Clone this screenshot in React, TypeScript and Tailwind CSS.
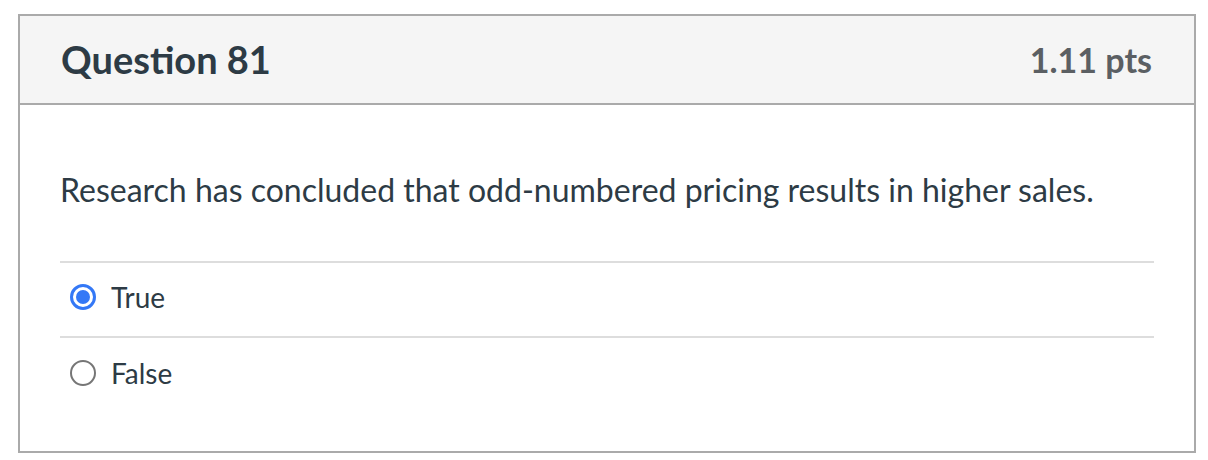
import React, { useState } from 'react';

const answers = ['True', 'False'];

function Radio({ checked }: { checked: boolean }) {
  if (checked) {
    return (
      <span className="flex h-[26px] w-[26px] shrink-0 items-center justify-center rounded-full border-[3px] border-[#3478f6] bg-white">
        <span className="h-[14px] w-[14px] rounded-full bg-[#3478f6]" />
      </span>
    );
  }
  return <span className="h-[26px] w-[26px] shrink-0 rounded-full border-2 border-[#767676] bg-white" />;
}

export default function App() {
  const [selected, setSelected] = useState('True');

  return (
    <div className="min-h-[460px] bg-white pl-[18px] pt-[14px] font-['Lato','Noto_Sans',sans-serif]">
      <div className="w-[1178px] h-[439px] border-2 border-[#aaaaaa] bg-white">
        <div className="flex h-[89px] items-center justify-between border-b-2 border-[#aaaaaa] bg-[#f5f5f5] pl-[41px] pr-[42px]">
          <h2 className="text-[38px] font-bold text-[#2d3b45]">Question 81</h2>
          <div className="text-[34px] font-bold text-[#5b5f63]">1.11 pts</div>
        </div>
        <div className="px-[40px] pt-[65px]">
          <p className="text-[32px] leading-[40px] text-[#2d3b45]">
            Research has concluded that odd-numbered pricing results in higher sales.
          </p>
          <div className="mt-[51px] border-t-2 border-[#dddddd]">
            {answers.map((a, i) => (
              <label
                key={a}
                onClick={() => setSelected(a)}
                className={`flex h-[75px] cursor-pointer items-center gap-[15px] pl-[10px] pb-[5px] text-[28px] text-[#2d3b45] ${
                  i < answers.length - 1 ? 'border-b-2 border-[#dddddd]' : ''
                }`}
              >
                <Radio checked={selected === a} />
                <span>{a}</span>
              </label>
            ))}
          </div>
        </div>
      </div>
    </div>
  );
}
